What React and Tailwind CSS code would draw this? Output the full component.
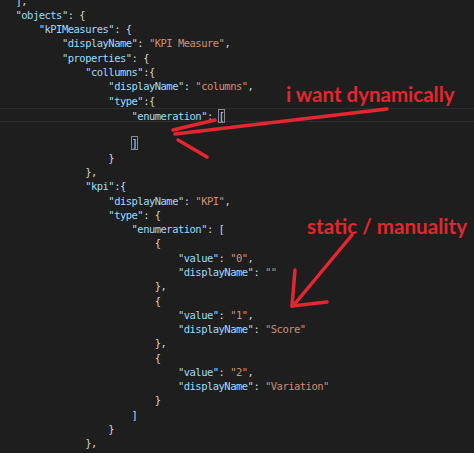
import React from "react";

const K = ({ children }) => <span className="text-[#9cdcfe]">{children}</span>;
const S = ({ children }) => <span className="text-[#ce9178]">{children}</span>;
const P = ({ children }) => <span className="text-[#d4d4d4]">{children}</span>;
const B = ({ children }) => (
  <span className="text-[#d4d4d4] ring-1 ring-[#8a8a8a]">{children}</span>
);

const ind = (n) => " ".repeat((n - 1) * 4);

const lines = [
  [1, <P>],</P>],
  [1, <><K>"objects"</K><P>: {"{"}</P></>],
  [2, <><K>"kPIMeasures"</K><P>: {"{"}</P></>],
  [3, <><K>"displayName"</K><P>: </P><S>"KPI Measure"</S><P>,</P></>],
  [3, <><K>"properties"</K><P>: {"{"}</P></>],
  [4, <><K>"collumns"</K><P>:{"{"}</P></>],
  [5, <><K>"displayName"</K><P>: </P><S>"columns"</S><P>,</P></>],
  [5, <><K>"type"</K><P>:{"{"}</P></>],
  [6, <><K>"enumeration"</K><P>: </P><B>[</B></>, true],
  [1, null],
  [6, <B>]</B>],
  [5, <P>{"}"}</P>],
  [4, <P>{"},"}</P>],
  [4, <><K>"kpi"</K><P>:{"{"}</P></>],
  [5, <><K>"displayName"</K><P>: </P><S>"KPI"</S><P>,</P></>],
  [5, <><K>"type"</K><P>: {"{"}</P></>],
  [6, <><K>"enumeration"</K><P>: [</P></>],
  [7, <P>{"{"}</P>],
  [8, <><K>"value"</K><P>: </P><S>"0"</S><P>,</P></>],
  [8, <><K>"displayName"</K><P>: </P><S>""</S></>],
  [7, <P>{"},"}</P>],
  [7, <P>{"{"}</P>],
  [8, <><K>"value"</K><P>: </P><S>"1"</S><P>,</P></>],
  [8, <><K>"displayName"</K><P>: </P><S>"Score"</S></>],
  [7, <P>{"},"}</P>],
  [7, <P>{"{"}</P>],
  [8, <><K>"value"</K><P>: </P><S>"2"</S><P>,</P></>],
  [8, <><K>"displayName"</K><P>: </P><S>"Variation"</S></>],
  [7, <P>{"}"}</P>],
  [6, <P>]</P>],
  [5, <P>{"}"}</P>],
  [4, <P>{"},"}</P>],
];

export default function App() {
  return (
    <div className="relative w-[474px] h-[453px] overflow-hidden bg-[#1e1e1e]">
      <div
        className="mt-[-6.4px] flex flex-col text-[10.5px] tracking-[-0.52px] text-[#d4d4d4]"
        style={{ fontFamily: '"DejaVu Sans Mono", "Liberation Mono", monospace' }}
      >
        {lines.map(([lvl, content, cur], i) => (
          <div
            key={i}
            className={
              "h-[14.29px] leading-[14.29px] pl-[15.5px] whitespace-pre " +
              (cur ? "border-y border-[#2c2c2c] leading-[12.29px]" : "")
            }
          >
            {ind(lvl)}
            {content}
          </div>
        ))}
      </div>

      <div
        className="absolute left-[286px] top-[82px] text-[20.5px] font-bold leading-[24px] text-[#e3262f] whitespace-nowrap"
        style={{ fontFamily: "Lato, 'Open Sans', sans-serif" }}
      >
        i want dynamically
      </div>
      <div
        className="absolute left-[307px] top-[214px] text-[20.6px] font-bold leading-[24px] text-[#e3262f] whitespace-nowrap"
        style={{ fontFamily: "Lato, 'Open Sans', sans-serif" }}
      >
        static / manuality
      </div>

      <svg className="absolute inset-0" width="474" height="453" viewBox="0 0 474 453">
        <g stroke="#e3262f" strokeWidth="3.5" strokeLinecap="round" fill="none">
          <line x1="387" y1="109" x2="175" y2="134" />
          <line x1="215" y1="120" x2="173" y2="130" />
          <line x1="178" y1="140" x2="207" y2="157" />
          <line x1="352" y1="235" x2="293" y2="306" />
          <line x1="295" y1="270" x2="292" y2="306" />
          <line x1="292" y1="306" x2="327" y2="302" />
        </g>
      </svg>
    </div>
  );
}
